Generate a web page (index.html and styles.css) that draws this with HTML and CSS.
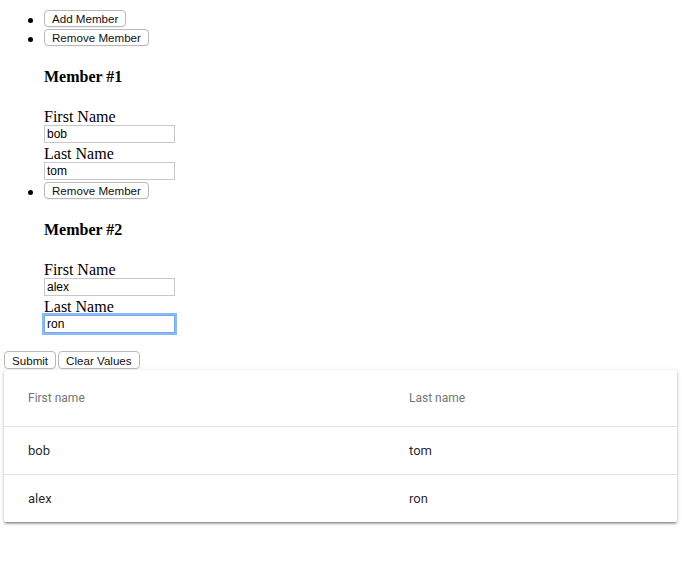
FILE: index.html
```html
<!DOCTYPE html>
<html>
<head>
<meta charset="utf-8">
<link rel="stylesheet" href="styles.css">
</head>
<body>
<form class="form">
  <ul class="members">
    <li class="item"><button type="button" class="btn">Add Member</button></li>
    <li class="item">
      <button type="button" class="btn">Remove Member</button>
      <h4 class="title">Member #1</h4>
      <div class="field">
        <label class="label">First Name</label>
        <input class="input" type="text" value="bob">
      </div>
      <div class="field">
        <label class="label">Last Name</label>
        <input class="input" type="text" value="tom">
      </div>
    </li>
    <li class="item">
      <button type="button" class="btn">Remove Member</button>
      <h4 class="title">Member #2</h4>
      <div class="field">
        <label class="label">First Name</label>
        <input class="input" type="text" value="alex">
      </div>
      <div class="field">
        <label class="label">Last Name</label>
        <input class="input input-focus" type="text" value="ron">
      </div>
    </li>
  </ul>
  <div class="actions">
    <button type="submit" class="btn">Submit</button>
    <button type="button" class="btn">Clear Values</button>
  </div>
</form>
<div class="paper">
  <table class="table">
    <thead>
      <tr class="head-row">
        <th class="cell head col1">First name</th>
        <th class="cell head">Last name</th>
      </tr>
    </thead>
    <tbody>
      <tr class="row">
        <td class="cell body">bob</td>
        <td class="cell body">tom</td>
      </tr>
      <tr class="row">
        <td class="cell body">alex</td>
        <td class="cell body">ron</td>
      </tr>
    </tbody>
  </table>
</div>
</body>
</html>
```

FILE: styles.css
```css
html, body {
  background: #ffffff;
}
body {
  margin: 0;
  padding: 0 5px 20px 4px;
  font-family: "Liberation Serif", "Times New Roman", serif;
  font-size: 16px;
  color: #000;
}
.form {
  margin: 0;
}
.members {
  margin: 10px 0 18px 0;
  padding-left: 40px;
  list-style: disc;
}
.item {
  line-height: 19px;
}
.btn {
  font-family: "Liberation Sans", Arial, sans-serif;
  font-size: 11.6px;
  height: 17px;
  line-height: 13px;
  padding: 0 7px;
  margin: 0;
  background: #ffffff;
  color: #111;
  border: 1px solid #b9b9b9;
  border-radius: 4px;
  vertical-align: top;
  box-shadow: 0 1px 0 rgba(0,0,0,0.04);
}
.title {
  margin: 20px 0 22px 0;
  font-size: 16px;
  font-weight: bold;
  line-height: 18px;
}
.field {
  line-height: 17px;
}
.label {
  display: block;
  font-size: 16px;
  line-height: 17px;
}
.input {
  display: block;
  box-sizing: border-box;
  width: 131px;
  height: 18px;
  margin: 0 0 2px 0;
  padding: 0 2px;
  font-family: "Liberation Sans", Arial, sans-serif;
  font-size: 12px;
  color: #000;
  border: 1px solid #c8c8c8;
  border-radius: 0;
  outline: none;
}
.input-focus {
  border-color: #7aa7e6;
  box-shadow: 0 0 0 2px rgba(100, 160, 245, 0.75);
}
.actions {
  display: flex;
  gap: 2px;
}
.actions .btn {
  height: 18px;
}
.paper {
  margin-top: 1px;
  background: #fff;
  border-radius: 2px;
  box-shadow: 0 1px 4px rgba(0,0,0,0.18), 0 2px 2px rgba(0,0,0,0.22), 0 3px 1px -2px rgba(0,0,0,0.14);
}
.table {
  width: 100%;
  border-collapse: collapse;
  font-family: Roboto, "Liberation Sans", sans-serif;
}
.cell {
  text-align: left;
  padding: 0 24px;
  border-bottom: 1px solid #e0e0e0;
}
.col1 {
  width: 333px;
}
.head-row {
  height: 56px;
}
.head {
  font-size: 12px;
  font-weight: 400;
  color: #757575;
}
.row {
  height: 48px;
}
.body {
  font-size: 13px;
  color: rgba(0,0,0,0.87);
}
.row:last-child .cell {
  border-bottom: none;
}
```
